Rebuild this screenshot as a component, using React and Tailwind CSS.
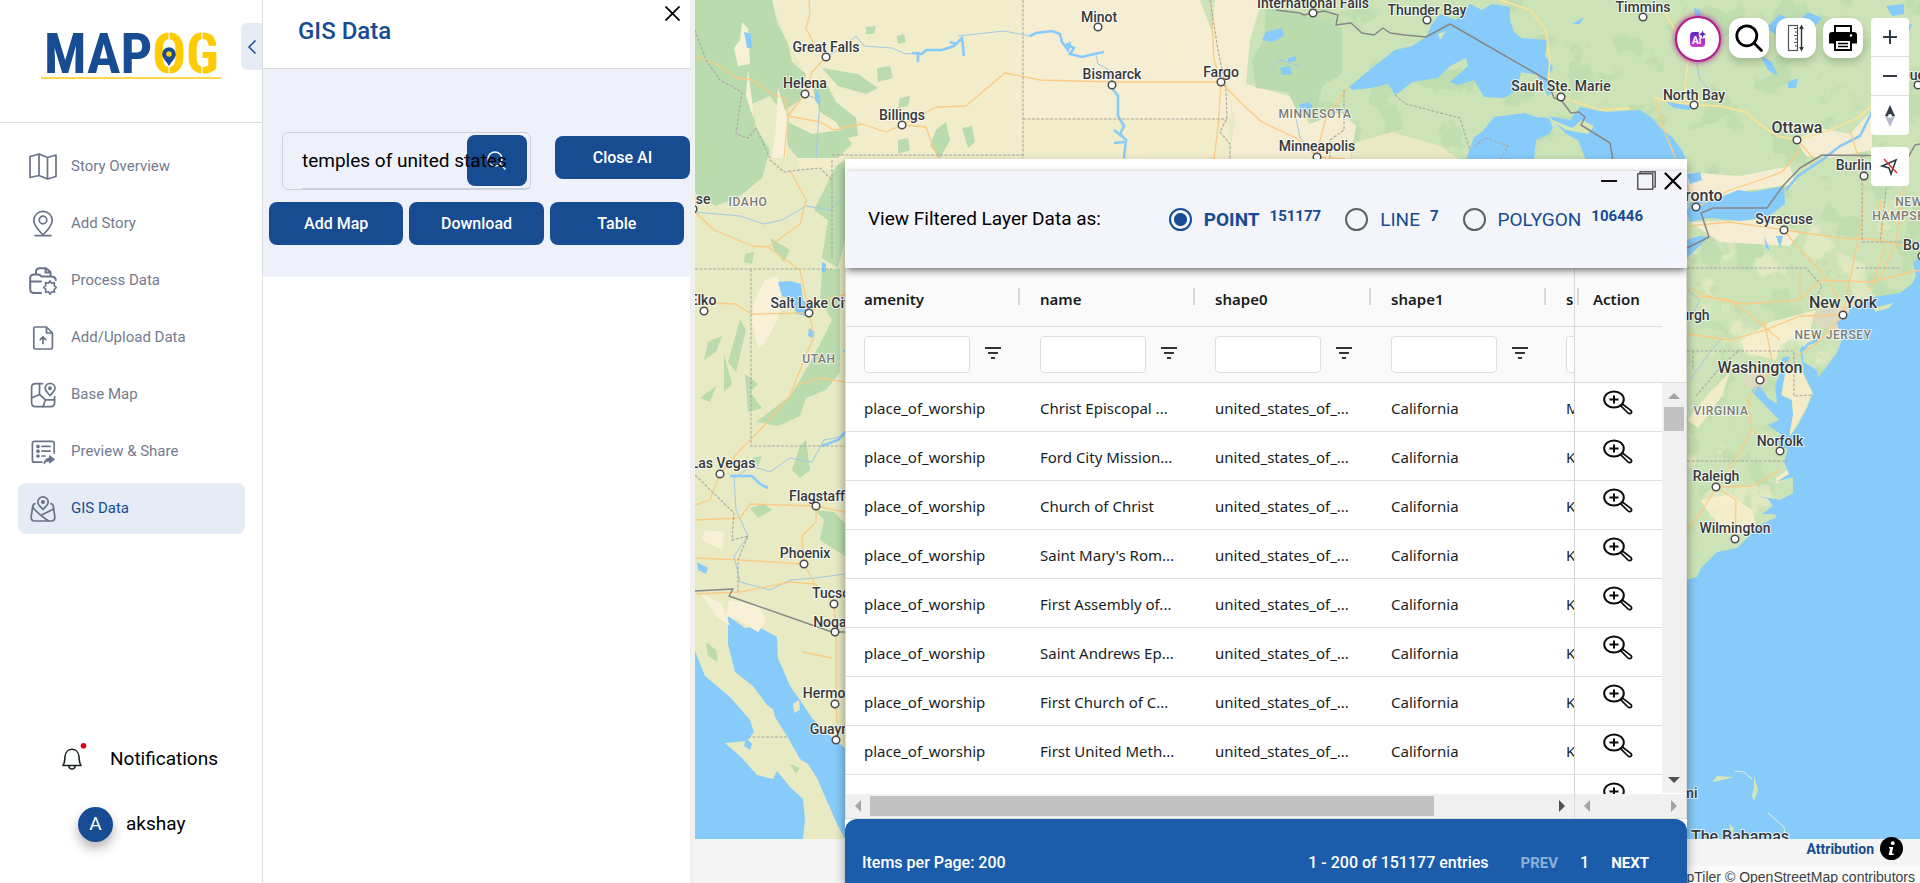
import React from 'react';

const ROBOTO = "font-['Roboto','Liberation_Sans',sans-serif]";
const GRIDFONT = "font-['Noto_Sans','Open_Sans',sans-serif]";

/* ---------- sidebar icons ---------- */
const ico = {
  width: 28,
  height: 28,
  viewBox: '0 0 28 28',
  fill: 'none',
  stroke: '#6b7389',
  strokeWidth: 1.7,
  strokeLinecap: 'round',
  strokeLinejoin: 'round',
  'aria-hidden': true,
};

const OverviewIcon = () => (
  <svg {...ico}>
    <path d="M1 3.5 L10 1 L18.5 4.5 L27 2 V23.5 L18.5 26 L10 22.5 L1 24.5 Z M10 1 V22.5 M18.5 4.5 V26" />
  </svg>
);
const PinIcon = () => (
  <svg {...ico}>
    <path d="M14 25 C10 20.5 4.8 16 4.8 10.5 A9.2 9.2 0 0 1 23.2 10.5 C23.2 16 18 20.5 14 25 Z" />
    <circle cx="14" cy="10" r="3.8" />
    <path d="M6 25.6 H22" />
  </svg>
);
const ProcessIcon = () => (
  <svg {...ico} strokeWidth="2">
    <path d="M12 26 H5 Q1.2 26 1.2 22 V11 Q1.2 7.500 5 7.500 H9 Q11 7.500 12.500 9.500 H22 Q26.500 9.500 26.800 13" />
    <path d="M7 7 V5 Q7 1.200 10.500 1.200 H17 L21.500 5 V9 M16.500 1.500 V5.500 H21" />
    <path d="M1.500 14.500 H12" />
    <path d="M21 13.800 L22.600 16.300 L25.500 15.600 L25.200 18.600 L27.400 20.500 L25.200 22.300 L25.500 25.300 L22.600 24.700 L21 27.300 L19.400 24.700 L16.500 25.300 L16.800 22.300 L14.600 20.500 L16.800 18.600 L16.500 15.600 L19.400 16.300 Z" strokeWidth="1.600" />
  </svg>
);
const UploadIcon = () => (
  <svg {...ico}>
    <path d="M6.5 3 H17.5 L23.4 9 V23.4 Q23.4 25 21.8 25 H6.2 Q4.8 25 4.8 23.4 V4.6 Q4.8 3 6.5 3 Z M17.5 3 V9 H23.4" />
    <path d="M14 19.5 V13 M11.2 15.6 L14 12.8 L16.8 15.6" />
  </svg>
);
const BaseMapIcon = () => (
  <svg {...ico}>
    <path d="M13.5 2.6 H6.5 Q2.6 2.6 2.6 6.5 V21.5 Q2.6 25.6 6.5 25.6 H21.5 Q25.6 25.6 25.6 21.5 V15.5" />
    <path d="M10.5 2.6 V13.5 L2.6 17 M10.5 13.5 L16.5 18.8 L14 25.6 M16.5 18.8 H25.4" />
    <path d="M21 14.5 C18.5 11.5 16.2 9.8 16.2 7.2 A4.9 4.9 0 0 1 26 7.2 C26 9.8 23.5 11.5 21 14.5 Z" />
    <circle cx="21" cy="7.2" r="1.1" fill="#6b7389" />
  </svg>
);
const ShareIcon = () => (
  <svg {...ico}>
    <path d="M13 24.2 H5.4 Q3.4 24.2 3.4 22.2 V5.4 Q3.4 3.4 5.4 3.4 H23.2 Q25.2 3.4 25.2 5.4 V15" />
    <path d="M13 8.4 H21 M13 13.2 H21 M13 18 H16" />
    <g fill="#6b7389">
      <circle cx="9" cy="8.4" r="1" />
      <circle cx="9" cy="13.2" r="1" />
      <circle cx="9" cy="18" r="1" />
      <path d="M15 25.5 Q15.5 20.5 20.5 20 V17.6 L25.5 21.4 L20.5 25 V22.8 Q17 22.8 15 25.5 Z" strokeWidth="1" />
    </g>
  </svg>
);
const GisIcon = () => (
  <svg {...ico}>
    <path d="M14 14.5 C11.3 11.5 8.8 9.8 8.8 7 A5.2 5.2 0 0 1 19.2 7 C19.2 9.8 16.7 11.5 14 14.5 Z" />
    <circle cx="14" cy="7" r="1.2" fill="#6b7389" />
    <path d="M6 8.6 Q4 9 3.8 11 L2.2 21.5 Q1.8 26 5.5 26 H22.5 Q26.2 26 25.8 21.5 L24.2 11 Q24 9 22 8.6" />
    <path d="M3.6 12 Q8 18 19.5 26 M24.6 14 Q20 16.5 13.5 19.5" />
  </svg>
);

const NAV = [
  ['Story Overview', OverviewIcon],
  ['Add Story', PinIcon],
  ['Process Data', ProcessIcon],
  ['Add/Upload Data', UploadIcon],
  ['Base Map', BaseMapIcon],
  ['Preview & Share', ShareIcon],
  ['GIS Data', GisIcon],
];

function Logo() {
  return (
    <svg width="182" height="60" viewBox="0 0 182 60" role="img" aria-label="MAPOG" className="overflow-visible">
      <text x="3" y="50" fontSize="56" fontWeight="700" className="font-['Roboto_Condensed','Liberation_Sans_Narrow','Roboto',sans-serif]">
        <tspan fill="#174c92">MAP</tspan>
        <tspan fill="#ffcb05">OG</tspan>
      </text>
      <path d="M128 8 V20 M128 42 V52 M161 8 V20 M161 42 V52" stroke="#fff" strokeWidth="1.200" />
      <path d="M0 54 H181 L179 56 H0 Z" fill="#ffd84a" />
      <path d="M128 43 C125 38 121.200 35 121.200 31 A6.800 6.800 0 0 1 134.800 31 C134.800 35 131 38 128 43 Z" fill="#174c92" />
      <circle cx="128" cy="31" r="2.800" fill="#ffcb05" />
    </svg>
  );
}

function Sidebar() {
  return (
    <aside className="relative flex w-[263px] shrink-0 flex-col border-r border-[#dcdcdc] bg-white">
      <div className="flex h-[123px] shrink-0 items-start justify-start border-b border-[#dcdcdc] pl-[41px] pt-[23px]">
        <Logo />
      </div>
      <button aria-label="Collapse sidebar" className="absolute right-0 top-[23px] flex h-[47px] w-[21px] items-center justify-center rounded-l-md bg-[#e6ecf5]">
        <svg width="10" height="16" viewBox="0 0 10 16" fill="none" stroke="#174c92" strokeWidth="1.5"><path d="M8.500 1.500 L2 8 L8.500 14.500" /></svg>
      </button>
      <nav className="mt-[18px] flex flex-col gap-1.5 pl-[18px] pr-[17px]">
        {NAV.map(([label, Icon]) => {
          const active = label === 'GIS Data';
          return (
            <a key={label} href="#" className={'flex h-[51px] items-center gap-3.5 rounded-lg pl-[11px] text-[15px] ' + (active ? 'bg-[#e5ecf5] text-[#174c92]' : 'text-[#747b8e]')}>
              <Icon />
              <span>{label}</span>
            </a>
          );
        })}
      </nav>
      <div className="mb-[41px] mt-auto flex flex-col gap-[30px]">
        <button className="flex h-[36px] items-center pl-[60px] text-left text-[19px] text-black">
          <svg width="30" height="32" viewBox="0 0 30 32" fill="none" stroke="#1c2526" strokeWidth="1.600" strokeLinejoin="round" aria-hidden="true">
            <path d="M3 22.500 C5 19.500 4.600 17 5 13.500 C5.400 9 8.500 6.300 12 6.300 C15.500 6.300 18.600 9 19 13.500 C19.400 17 19 19.500 21 22.500 Z M8.800 23 Q9.200 26 12 26 Q14.800 26 15.200 23" />
            <circle cx="23.500" cy="2.800" r="2.800" fill="#d90012" stroke="none" />
          </svg>
          <span className="ml-5">Notifications</span>
        </button>
        <button className="flex h-[35px] items-center gap-[13px] pl-[78px] text-[19px] text-black">
          <span className="flex size-[35px] items-center justify-center rounded-full bg-[#174c92] text-white shadow-[0_6px_12px_rgba(0,0,0,0.3)]">A</span>
          <span>akshay</span>
        </button>
      </div>
    </aside>
  );
}

const btn = 'flex h-[43px] items-center justify-center rounded-lg bg-[#174c92] text-base font-medium text-white';

function Panel() {
  return (
    <section className="relative flex w-[427px] shrink-0 flex-col bg-white">
      <div className="h-[69px] border-b border-[#dcdcdc] pl-[35px] pt-[15px]">
        <h1 className="text-2xl font-medium leading-8 text-[#174c92]">GIS Data</h1>
        <button aria-label="Close panel" className="absolute right-2 top-1 p-0.5">
          <svg width="15" height="15" viewBox="0 0 15 15" stroke="#000" strokeWidth="1.800"><path d="M0.500 0.500 L14.500 14.500 M14.500 0.500 L0.500 14.500" /></svg>
        </button>
      </div>
      <div className="bg-[#eef1fa] pb-8 pt-[63px]">
        <div className="flex items-start gap-6 pl-[19px]">
          <div className="relative h-[58px] w-[249px] rounded-md border border-[#cdd1da] pl-[19px]">
            <button aria-label="Search" className="absolute right-[3px] top-0.5 flex h-[51px] w-[60px] items-center justify-center rounded-lg bg-[#174c92]">
              <svg width="20" height="20" viewBox="0 0 20 20" fill="none" stroke="#fff" strokeWidth="1.400"><circle cx="8" cy="8" r="7" /><path d="M13 13 L18.500 18.500" /></svg>
            </button>
            <div className="relative h-[56px] border-b border-[#c9cdd6]">
              <input aria-label="Search GIS data" defaultValue="temples of united states of america" className="h-full w-[209px] bg-transparent text-[19px] text-black outline-none" />
            </div>
          </div>
          <button className={btn + ' mt-1 flex-1'}>Close AI</button>
        </div>
        <div className="mt-3 grid grid-cols-3 gap-1.5 px-1.5">
          <button className={btn}>Add Map</button>
          <button className={btn}>Download</button>
          <button className={btn}>Table</button>
        </div>
      </div>
    </section>
  );
}

/* ---------- map ---------- */
const CITIES = [
  ['Great Falls', 826, 47, 826, 57],
  ['Helena', 805, 83, 805, 94],
  ['Billings', 902, 115, 902, 125],
  ['Minot', 1099, 17, 1098, 27],
  ['Bismarck', 1112, 74, 1112, 85],
  ['Fargo', 1221, 72, 1221, 82],
  ['International Falls', 1313, 3, 1313, 13],
  ['Minneapolis', 1317, 146, 1317, 157],
  ['Thunder Bay', 1427, 10, 1427, 20],
  ['Timmins', 1643, 7, 1643, 17],
  ['Sault Ste. Marie', 1561, 86, 1561, 97],
  ['North Bay', 1694, 95, 1694, 105],
  ['Ottawa', 1797, 128, 1797, 140],
  ['Québec', 1924, 75, 1918, 85],
  ['Burlington', 1868, 165, 1864, 176],
  ['Toronto', 1695, 196, 1696, 207],
  ['Syracuse', 1784, 219, 1784, 230],
  ['Boston', 1925, 245, 1922, 256],
  ['Pittsburgh', 1677, 315, 1660, 325],
  ['New York', 1843, 303, 1843, 315],
  ['Washington', 1760, 368, 1760, 380],
  ['Norfolk', 1780, 441, 1780, 451],
  ['Raleigh', 1716, 476, 1716, 487],
  ['Wilmington', 1735, 528, 1735, 539],
  ['Boise', 693, 199, 693, 209],
  ['Elko', 703, 300, 704, 311],
  ['Salt Lake City', 813, 303, 809, 313],
  ['Las Vegas', 723, 463, 720, 474],
  ['Flagstaff', 817, 496, 816, 506],
  ['Phoenix', 805, 553, 804, 564],
  ['Tucson', 835, 593, 834, 604],
  ['Nogales', 839, 622, 835, 632],
  ['Hermosillo', 837, 693, 835, 704],
  ['Guaymas', 839, 729, 836, 740],
  ['Miami', 1678, 793, 1660, 803],
  ['The Bahamas', 1740, 837, 0, 0],
];
const BIG = ['Ottawa', 'Toronto', 'New York', 'Washington', 'The Bahamas'];

const STATES = [
  ['MINNESOTA', 1315, 114],
  ['IDAHO', 748, 202],
  ['UTAH', 819, 359],
  ['NEW', 1909, 202],
  ['HAMPSHIRE', 1909, 216],
  ['NEW JERSEY', 1833, 335],
  ['VIRGINIA', 1721, 411],
];

const EAST_COAST =
  'M1680 0 H1200 L1215 40 L1235 120 L1222 200 V839 H1680 V582 L1697 577 L1701 568 L1717 552 L1737 548 L1750 535 L1762 524 L1777 517 L1774 514 L1762 514 L1773 506 L1768 499 L1758 496 L1780 500 L1793 493 L1793 477 L1776 482 L1789 474 L1784 462 L1788 449 L1780 447 L1776 437 L1783 436 L1768 425 L1779 420 L1760 400 L1752 392 L1760 386 L1768 398 L1777 404 L1775 384 L1782 370 L1782 358 L1790 356 L1786 370 L1781 395 L1792 400 L1793 415 L1789 437 L1797 427 L1807 408 L1813 393 L1804 374 L1800 350 L1803 344 L1803 362 L1817 370 L1818 378 L1837 353 L1843 337 L1836 322 L1847 317 L1850 309 L1873 297 L1900 293 L1912 284 L1916 276 L1913 262 L1920 258 V0 Z';

const FOREST = [
  'M695 0 H772 L777 22 L788 44 L792 62 L806 74 L800 100 L782 112 L770 96 L752 104 L756 128 L770 150 L762 178 L740 196 L716 206 L695 194 Z',
  'M811 84 L828 86 L836 102 L856 118 L858 136 L846 138 L836 122 L820 112 Z',
  'M822 68 L858 74 L878 88 L866 94 L838 86 Z',
  'M877 68 L890 66 L893 78 L878 82 Z',
  'M784 120 L800 128 L812 134 L842 130 L852 144 L838 158 L798 158 L788 146 Z',
  'M898 140 L908 138 L910 150 L898 154 Z M936 130 L946 122 L950 140 L940 158 L930 146 Z M962 128 L972 126 L975 142 L968 148 Z',
  'M897 36 L904 34 L906 42 L898 44 Z M866 27 L876 26 L874 34 L866 34 Z M900 98 L910 96 L908 106 L898 108 Z',
  'M836 166 L845 160 V240 L838 268 L822 258 L828 220 L814 210 L824 190 Z',
  'M822 270 L840 268 V372 L826 390 L806 398 L800 416 L778 426 L756 422 L790 396 L806 370 L820 344 L832 320 L820 300 Z',
  'M740 320 L746 330 L736 372 L728 362 Z M708 342 L722 336 L716 352 L704 360 Z M745 374 L758 384 L750 392 L762 408 L748 412 Z M700 398 L716 386 L710 402 Z M724 354 L732 384 L724 392 Z',
  'M800 446 L806 440 L810 470 L800 478 L792 470 Z M815 510 L834 512 L845 524 V556 L832 548 L820 540 L824 520 Z',
  'M750 508 L764 504 L772 510 L758 518 Z M752 458 L762 456 L758 466 Z M706 642 L716 650 L718 662 L708 656 Z M790 764 L800 768 L796 774 Z M770 238 L790 250 L784 262 L774 250 Z M745 254 L754 252 L752 264 L744 262 Z',
  'M1266 8 L1300 14 L1342 28 L1342 74 L1322 86 L1316 112 L1300 118 L1288 92 L1256 88 L1252 60 L1264 40 Z',
];

const BARE = [
  'M742 22 L748 28 L750 64 L738 66 L734 48 L740 40 Z',
  'M748 70 L752 100 L754 120 L746 96 Z',
  'M778 88 L788 120 L786 158 L772 158 L776 128 Z',
  'M765 280 L778 276 L782 300 L778 318 L766 342 L758 348 L752 322 L754 302 Z',
  'M729 600 L760 606 L766 622 L758 632 L738 620 L726 616 Z',
  'M700 592 L722 604 L730 626 L716 616 Z M705 530 L724 532 L722 550 L702 540 Z',
];

const ROADS = [
  'M809 0 L810 14 L806 28 L814 44 L826 57 L812 72 L805 94 L788 116 L784 158',
  'M695 56 L720 66 L736 78 L752 80 L772 94 L786 98 L788 116 L820 122 L834 130 L862 124 L886 132 L902 125 L926 127 L932 144 L938 158',
  'M902 125 L936 107 L966 106 L980 94 L1005 73 L1040 80 L1112 82 L1221 82 L1240 102 L1262 122 L1296 138 L1317 157',
  'M1211 0 L1214 60 L1221 82 L1218 128 L1214 159',
  'M695 212 L714 230 L752 246 L768 247 L800 224 L806 200 L790 170 M768 247 L800 270 L809 313 L814 336 L796 380 L790 396 L760 430 L740 450 L720 474 L710 500 L695 505',
  'M695 302 L735 304 L752 314 L809 313 L830 298 L845 295 M796 385 L820 378 L845 382',
  'M695 520 L740 518 L750 504 L816 506 L845 512 M816 506 L816 522 L802 536 L804 564 L815 584 L834 604 L836 632 L836 704 L838 740',
  'M695 558 L740 560 L804 564 M695 594 L740 592 L790 582 L815 584 M803 652 L832 658',
  'M1349 87 L1340 98 L1326 118 L1320 140 L1317 157 L1345 159',
  'M1656 100 L1664 130 L1676 160 L1696 207 L1730 190 L1760 180 L1782 172 L1800 150',
  'M1689 226 L1730 222 L1784 230 L1840 238 L1880 240 L1920 250 M1784 230 L1800 250 L1820 270 L1840 300',
  'M1797 140 L1815 160 L1800 168 M1850 130 L1864 176 L1862 220 L1852 270 L1843 315',
  'M1687 288 L1720 300 L1745 304 L1800 300 L1820 280 L1870 282 L1920 270 M1687 334 L1730 340 L1765 330 L1800 316 L1843 315',
  'M1843 315 L1815 345 L1790 360 L1760 380 L1748 402 L1752 430 L1735 460 L1716 487 L1704 508 L1687 530',
  'M1697 296 L1730 300 L1756 320 L1780 340 M1764 320 L1772 360 M1716 487 L1736 500 L1735 539 M1716 487 L1752 486 L1780 470 M1752 430 L1780 451',
  'M1800 300 L1800 270 M1880 200 L1884 250 L1870 290 M1905 180 L1896 240 L1880 280',
];
const MINOR_ROADS = [
  'M1500 0 L1530 10 L1546 30 L1550 60 L1548 82 L1561 97 L1600 110 L1630 108',
  'M1664 10 L1676 32 L1688 60 L1684 98 L1694 105',
  'M1654 98 L1694 105 L1720 106 L1746 112 L1762 126 L1778 136 L1797 140 L1830 130 L1858 118 L1880 98',
];

const STATE_LINES = [
  'M1023 0 V158', 'M832 155 H1023', 'M1023 119 H1227', 'M1210 0 L1218 50 L1226 90 L1227 118 L1220 132 L1230 144 V159',
  'M695 30 L706 60 L720 80 L742 92 L736 134 L748 138 L756 128 L770 158', 'M832 160 V259', 'M695 269 H832', 'M751 269 V446 H845',
  'M695 475 L734 513 L732 540 L748 536 L738 560 L738 592', 'M770 160 L784 172 L800 170 L820 168 L832 180', 'M748 737 H787',
  'M1344 90 V130 L1330 140 V159 M1395 95 L1406 104 L1460 118 L1470 150', 'M1474 146 L1486 138 L1508 146 L1500 160',
  'M1687 268 H1806 L1822 286 L1812 305', 'M1687 351 H1794 V396 L1813 395', 'M1687 461 H1788', 'M1862 242 H1920 M1856 268 H1900', 'M1696 396 L1725 362 L1740 350 M1693 351 V370',
  'M1862 156 V242 M1890 156 L1880 242',
];

const BORDERS = [
  'M1276 10 L1300 13 L1304 15 L1324 11 L1338 15 L1336 25 L1351 23 L1362 33 L1374 35 L1383 28 L1390 33 L1405 35 L1426 37 L1450 24 L1547 80 L1554 98 L1561 100 L1571 113 L1579 112 L1585 117 L1581 125 L1610 143 L1613 160',
  'M1687 248 L1709 237 L1701 213 L1713 208 L1767 208 L1782 187 L1800 168 L1822 155 L1909 156 L1915 145 L1920 144',
  'M695 591 L733 589 L729 596 L832 632 H845',
];

const LAKES = [
  'M1349 87 L1372 68 L1395 50 L1412 46 L1426 37 L1432 24 L1440 14 L1456 20 L1470 4 L1482 10 L1492 4 L1510 7 L1510 20 L1514 32 L1521 38 L1547 40 L1545 56 L1553 67 L1547 80 L1554 90 L1548 96 L1537 75 L1521 72 L1517 90 L1504 98 L1484 97 L1474 80 L1458 85 L1450 82 L1468 66 L1466 58 L1450 66 L1438 78 L1412 82 L1400 92 L1395 95 L1388 84 L1371 88 L1352 90 Z',
  'M1466 160 L1474 137 L1482 132 L1494 117 L1525 113 L1536 117 L1549 118 L1553 128 L1549 134 L1536 140 L1534 160 Z',
  'M1549 116 L1570 120 L1580 107 L1606 112 L1640 110 L1652 118 L1660 128 L1672 137 L1682 150 L1686 160 H1586 L1578 140 L1566 134 Z',
  'M1687 213 L1690 202 L1716 199 L1738 190 L1752 192 L1784 186 L1785 204 L1768 217 L1740 221 L1709 218 L1690 222 Z',
  'M1687 240 L1700 236 L1709 237 L1687 258 Z',
  'M1687 174 L1700 172 L1702 180 L1690 184 Z',
  'M1666 102 L1692 106 L1690 110 L1674 108 Z',
  'M1262 40 L1266 32 L1282 28 L1284 36 L1272 42 Z',
  'M1280 68 L1290 66 L1292 74 L1282 75 Z M1288 58 L1296 56 L1296 61 L1288 62 Z M1306 102 L1312 104 L1312 109 L1304 109 Z M1280 59 L1284 60 L1282 62 Z',
  'M744 32 L751 34 L752 48 L747 48 Z',
  'M815 88 L820 96 L820 106 L815 100 Z',
  'M778 282 L790 281 L801 284 L803 300 L812 306 L806 316 L796 314 L793 300 L782 296 Z',
  'M822 262 L826 264 L826 272 L822 272 Z M809 328 L815 332 L812 338 L808 336 Z',
  'M697 562 L708 568 L706 574 L698 570 Z',
  'M1300 104 L1310 102 L1308 112 L1300 110 Z',
  'M1886 6 L1904 4 L1904 14 L1892 16 Z M1900 26 L1912 24 L1910 30 L1900 30 Z',
  'M1766 28 L1780 14 L1790 20 L1778 36 Z M1800 20 L1808 12 L1822 18 L1812 30 L1804 26 Z M1760 55 L1772 62 L1778 76 L1768 70 Z',
  'M1694 8 L1698 36 L1704 38 L1700 10 Z M1788 82 L1798 78 L1796 88 L1788 88 Z M1572 24 L1584 17 L1580 24 Z',
  'M1776 236 L1783 236 L1780 248 Z M1764 236 L1770 250 L1766 248 Z',
];

const RIVERS = [
  'M826 57 L842 48 L856 36 L864 46 L892 48 L906 54 L920 53',
  'M958 36 L1004 31 L1030 36 M1096 54 L1098 64 L1110 70 L1112 85',
  'M805 94 L820 100 L816 158',
  'M695 212 L740 216 L764 224 L782 220 L806 206 L830 210 L845 196',
  'M845 436 L824 440 L812 462 L790 458 L770 472 L752 466 L734 478 L736 510 L748 536 L734 556 L740 582 L770 590 L790 580 L815 578 L845 574',
  'M1317 157 L1300 138 L1296 118 L1312 98 M1300 66 L1280 60 L1270 70',
  'M1696 60 L1700 80 L1712 92 L1722 108', 'M1687 290 L1700 300 L1690 320 M1690 380 L1710 352 L1722 338',
];
const STRONG_RIVERS = [
  'M912 53 L922 54 L926 50 L942 50 L954 46 L962 38 L964 56 M918 52 L918 62 M956 44 L950 42',
  'M1030 36 L1036 33 L1044 32 L1052 31 L1060 34 L1062 42 L1068 50 L1070 42 M1066 44 L1074 48 L1070 54 L1082 57 L1094 54 L1104 52',
  'M1112 88 L1118 96 L1118 116 L1124 126 L1120 134 L1126 140 L1124 158 M1114 130 L1124 138 M1114 143 L1124 142',
  'M845 350 V352 M730 476 L752 476 L760 484 L768 488 M822 446 L838 440 L845 432',
  'M1786 190 L1798 176 L1822 160 L1840 146 L1860 136 L1872 112 L1888 104',
  'M1866 180 L1862 160 L1858 170', 'M1803 350 L1808 344 L1818 340 M1752 392 L1758 386',
];

function MapCanvas() {
  return (
    <svg className="block h-full w-full" viewBox="695 0 1225 839" preserveAspectRatio="xMinYMin slice" role="img" aria-label="Map of the United States">
      <defs>
        <filter id="forestNoise" x="0" y="0" width="100%" height="100%" colorInterpolationFilters="sRGB">
          <feTurbulence type="fractalNoise" baseFrequency="0.03" numOctaves="5" seed="11" result="n" />
          <feColorMatrix in="n" type="matrix" values="0 0 0 0 0.71  0 0 0 0 0.85  0 0 0 0 0.66  0 14 0 0 -8" />
        </filter>
        <filter id="fieldNoise" x="0" y="0" width="100%" height="100%" colorInterpolationFilters="sRGB">
          <feTurbulence type="fractalNoise" baseFrequency="0.025" numOctaves="5" seed="4" result="n" />
          <feColorMatrix in="n" type="matrix" values="0 0 0 0 0.97  0 0 0 0 0.94  0 0 0 0 0.81  12 0 0 0 -7.1" />
        </filter>
        <clipPath id="eastClip"><path d={EAST_COAST} /></clipPath>
      </defs>

      <rect x="695" y="0" width="1225" height="839" fill="#86cbfa" />
      <path d="M695 0 H1300 V839 H845 V748 L830 736 L812 718 L800 700 L790 686 L778 658 L777 637 L757 626 L745 628 L728 616 V644 L735 672 L753 686 L770 709 L787 736 L800 759 L808 764 L817 778 L827 801 L837 824 L845 839 H803 L805 819 L803 799 L790 787 L777 771 L773 779 L757 775 L743 759 L725 743 L747 741 L754 732 L750 720 L730 697 L705 676 L695 651 Z" fill="#e7eac3" />
      <path d="M772 0 H1240 L1225 60 L1232 170 H800 L790 120 L806 74 L786 40 Z" fill="#f1ecc9" />
      <path d="M1023 0 H1240 L1225 60 L1232 118 H1023 Z" fill="#f6eed2" />
      <path d={EAST_COAST} fill="#cbe3b6" />
      <g clipPath="url(#eastClip)">
        <rect x="1300" y="0" width="620" height="600" filter="url(#forestNoise)" opacity="0.5" />
        <path d="M1215 0 H1262 L1250 40 L1246 84 L1290 96 L1310 124 L1340 112 L1356 126 L1350 160 H1200 Z" fill="#f5edd1" />
        <path d="M1356 142 L1392 132 L1440 146 L1460 160 H1350 Z M1592 130 L1610 122 L1640 134 L1630 146 Z" fill="#ebe9c4" />
        <path d="M1687 172 L1740 176 L1790 166 L1796 184 L1752 190 L1690 204 Z M1690 222 L1760 220 L1800 232 L1790 246 L1720 242 Z M1796 140 L1820 128 L1850 134 L1872 110 V150 L1830 158 L1806 156 Z" fill="#f5edd1" />
        <path d="M1742 340 L1770 322 L1816 310 L1810 330 L1780 345 L1776 360 L1744 352 Z M1784 366 L1802 372 L1812 392 L1806 408 L1790 436 L1792 400 L1782 396 Z M1687 420 L1710 392 L1730 372 L1722 396 L1698 428 Z" fill="#f3ecc8" />
        <path d="M1700 500 L1730 494 L1752 510 L1756 524 L1736 536 L1718 524 Z M1776 478 L1790 468 L1792 476 L1776 484 Z" fill="#f3ecc8" />
        <rect x="1687" y="200" width="233" height="380" filter="url(#fieldNoise)" opacity="0.5" />
        <ellipse cx="1838" cy="318" rx="26" ry="12" fill="#e3d6c4" opacity="0.7" />
        <ellipse cx="1756" cy="380" rx="12" ry="9" fill="#e3d6c4" opacity="0.7" />
      </g>
      <rect x="800" y="0" width="420" height="160" filter="url(#fieldNoise)" opacity="0.35" />
      <g fill="#b9dbad">
        {FOREST.map((d) => <path key={d} d={d} />)}
      </g>
      <g fill="#f8f1d8">
        {BARE.map((d) => <path key={d} d={d} />)}
      </g>
      <g fill="#86cbfa">
        {LAKES.map((d) => <path key={d} d={d} />)}
      </g>
      <path d="M1874 308 L1893 303 L1889 308 L1875 312 Z M1712 782 L1717 776 L1734 777 L1718 781 Z M1754 776 L1758 790 L1754 801 L1752 796 L1754 788 Z M1729 824 L1734 828 L1732 836 Z M1438 34 L1446 31 L1440 40 Z M1548 118 L1572 128 L1582 120 L1594 126 L1588 134 L1566 130 Z" fill="#d6e6b4" />
      <path d="M763 703 L773 709 L775 716 L767 711 Z M793 704 L799 700 L800 710 L794 713 Z" fill="#e7eac3" />
      <path d="M746 738 L752 744 L750 750 L744 746 Z" fill="#86cbfa" />
      <path d="M1735 771 L1744 772 L1752 779 M1768 813 L1784 827 L1785 834" fill="none" stroke="#e6efd0" strokeWidth="1" />
      <g fill="none" stroke="#a3c8e4" strokeWidth="1">
        {RIVERS.map((d) => <path key={d} d={d} />)}
      </g>
      <g fill="none" stroke="#86cbfa" strokeWidth="2.6">
        {STRONG_RIVERS.map((d) => <path key={d} d={d} />)}
      </g>
      <g fill="none" stroke="#fbcb86" strokeWidth="1.3" strokeLinejoin="round">
        {ROADS.map((d) => <path key={d} d={d} />)}
      </g>
      <g fill="none" stroke="#f8e39a" strokeWidth="1.800" strokeLinejoin="round">
        {MINOR_ROADS.map((d) => <path key={d} d={d} />)}
      </g>
      <g fill="none" stroke="#aaa9a2" strokeWidth="1.100" strokeDasharray="3 1.500">
        {STATE_LINES.map((d) => <path key={d} d={d} />)}
      </g>
      <g fill="none" stroke="#878787" strokeWidth="1.500" strokeLinejoin="round">
        {BORDERS.map((d) => <path key={d} d={d} />)}
      </g>

      <g className={ROBOTO} textAnchor="middle" stroke="#ffffff" strokeOpacity="0.75" strokeWidth="2" paintOrder="stroke" strokeLinejoin="round">
        <g fill="#7c7a78" fontSize="12" fontWeight="500" className="tracking-wider">
          {STATES.map(([t, x, y]) => <text key={t} x={x} y={y + 4}>{t}</text>)}
        </g>
        <g fill="#37393d" fontWeight="500">
          {CITIES.map(([t, x, y]) => <text key={t} x={x} y={y + 5} fontSize={BIG.includes(t) ? 16 : 14}>{t}</text>)}
        </g>
      </g>
      <g fill="#ffffff" stroke="#4c4c50" strokeWidth="1.500">
        {CITIES.filter((c) => c[3] > 0).map(([t, , , x, y]) => <circle key={t} cx={x} cy={y} r="3.800" />)}
      </g>
    </svg>
  );
}

const tile = 'flex size-10 items-center justify-center rounded-xl bg-white shadow-[0_4px_8px_rgba(0,0,0,0.2)]';
const ctl = 'flex h-[39px] w-[38px] items-center justify-center';

function MapTools() {
  return (
    <div className="absolute right-[11px] top-4 flex items-start gap-2">
      <button aria-label="AI assistant" className="flex size-[46px] items-center justify-center rounded-full border-2 border-[#b01d8c] bg-white shadow-[0_0_6px_#b01d8c]">
        <svg width="18" height="18" viewBox="0 0 18 18">
          <defs><linearGradient id="ai" x1="0" y1="0" x2="0" y2="1"><stop offset="0" stopColor="#5a28b8" /><stop offset="1" stopColor="#cf3fd0" /></linearGradient></defs>
          <rect x="1" y="2" width="15" height="15" rx="3.500" fill="url(#ai)" />
          <circle cx="14" cy="4" r="4.500" fill="#fff" />
          <path d="M13.500 0.500 L14.600 3.100 L17.200 4.200 L14.600 5.300 L13.500 7.900 L12.400 5.300 L9.800 4.200 L12.400 3.100 Z" fill="#5a28b8" />
          <text x="3" y="14" fontSize="10" fontWeight="700" fill="#fff" className={ROBOTO}>Ai</text>
        </svg>
      </button>
      <div className="mt-0.5 flex gap-[7px]">
        <button aria-label="Search map" className={tile}>
          <svg width="28" height="28" viewBox="0 0 28 28" fill="none" stroke="#000" strokeWidth="2.800" strokeLinecap="round"><circle cx="11.800" cy="11.800" r="10" /><path d="M19 19 L26.500 26.500" /></svg>
        </button>
        <button aria-label="Measure" className={tile}>
          <svg width="18" height="28" viewBox="0 0 18 28" fill="none" stroke="#555" strokeWidth="1.200"><rect x="1.500" y="1.500" width="9" height="25" /><path d="M10.500 4.500 H7 M10.500 8 H8 M10.500 11.500 H7 M10.500 15 H8 M10.500 18.500 H7 M10.500 22 H8" /><path d="M14.500 3 V25 M12.800 5 L14.500 2 L16.200 5 M12.800 23 L14.500 26 L16.200 23" stroke="#333" strokeWidth="1.400" /></svg>
        </button>
        <button aria-label="Print" className={tile}>
          <svg width="28" height="26" viewBox="0 0 28 26">
            <path d="M6 8 V1 H22 V8" fill="#fff" stroke="#000" strokeWidth="2" />
            <path d="M3 7 H25 Q28 7 28 10 V18.500 H23 V14 H5 V18.500 H0 V10 Q0 7 3 7 Z" />
            <rect x="6" y="15" width="16" height="10" fill="#fff" stroke="#000" strokeWidth="2" />
            <path d="M9 18.500 H19 M9 21.500 H19" stroke="#000" strokeWidth="1.500" />
            <circle cx="22" cy="10.500" r="1.200" fill="#fff" />
          </svg>
        </button>
      </div>
      <div className="mt-0.5 flex flex-col gap-3">
        <div className="flex flex-col divide-y divide-[#dddddd] rounded bg-white">
          <button aria-label="Zoom in" className={ctl}>
            <svg width="16" height="16" viewBox="0 0 16 16" stroke="#333b45" strokeWidth="2"><path d="M8 1 V15 M1 8 H15" /></svg>
          </button>
          <button aria-label="Zoom out" className={ctl}>
            <svg width="16" height="16" viewBox="0 0 16 16" stroke="#333b45" strokeWidth="2"><path d="M1 8 H15" /></svg>
          </button>
          <button aria-label="Reset bearing" className={ctl}>
            <svg width="12" height="22" viewBox="0 0 12 22"><path d="M6 0 L11 11 H1 Z" fill="#333b45" /><path d="M6 22 L11 11 H1 Z" fill="#b3b9c9" /><circle cx="6" cy="11" r="2" fill="#fff" /></svg>
          </button>
        </div>
        <button aria-label="Find my location" className={ctl + ' rounded bg-white'}>
          <svg width="20" height="20" viewBox="0 0 20 20" fill="none" strokeWidth="1.600"><path d="M2 9 L16 3 L11 17 L9 11 Z" stroke="#333b45" /><path d="M4 2 L17 16" stroke="#e02a2a" strokeWidth="1.400" /></svg>
        </button>
      </div>
    </div>
  );
}

/* ---------- data window ---------- */
const ROWS = [
  ['Christ Episcopal ...', 'Marin'],
  ['Ford City Mission...', 'Kern'],
  ['Church of Christ', 'Kern'],
  ["Saint Mary's Rom...", 'Kern'],
  ['First Assembly of...', 'Kern'],
  ['Saint Andrews Ep...', 'Kern'],
  ['First Church of C...', 'Kern'],
  ['First United Meth...', 'Kern'],
];
const COLS = ['amenity', 'name', 'shape0', 'shape1', 'shape2'];

const FilterIcon = () => (
  <svg width="18" height="14" viewBox="0 0 18 14" stroke="#303438" strokeWidth="1.800" aria-hidden="true"><path d="M1 2 H17 M4 7 H14 M7 12 H11" /></svg>
);
const ZoomToIcon = () => (
  <svg width="30" height="25" viewBox="0 0 30 25" fill="none" stroke="#0b0b0b" strokeWidth="2" aria-hidden="true">
    <ellipse cx="11" cy="9.500" rx="9.800" ry="8" />
    <path d="M11 5.500 V13.500 M6.500 9.500 H15.500" />
    <path d="M17.500 15.500 L19.500 14 L28 20.500 Q29.500 22.500 27.500 23.500 Q26 24 25 23 Z" strokeWidth="1.700" />
  </svg>
);

const th = 'relative h-[58px] border-b border-[#dcdcdc] p-0 pl-[18px] pt-1 text-left text-[15px] font-semibold text-[#181d1f]';
const td = 'h-[49px] whitespace-nowrap border-b border-[#dde0e2] p-0 pl-[18px] pt-0.5 text-[15px] text-[#181d1f]';
const sep = 'absolute top-[19px] h-[17px] w-0.5 bg-[#d8d9da]';

function MainTable() {
  return (
    <table className="w-[878px] table-fixed border-separate border-spacing-0">
      <colgroup>
        <col className="w-[176px]" /><col className="w-[175px]" /><col className="w-[176px]" /><col className="w-[175px]" /><col className="w-[176px]" />
      </colgroup>
      <thead className="bg-[#fafafa]">
        <tr>
          {COLS.map((c) => (
            <th key={c} scope="col" className={th}>{c}<span className={sep + ' right-0.5'} /></th>
          ))}
        </tr>
        <tr>
          {COLS.map((c) => (
            <th key={c} className="h-[56px] border-b border-[#dcdcdc] p-0 pl-[18px]">
              <div className="flex items-center gap-3.5">
                <input aria-label={'Filter ' + c} className="h-[37px] w-[106px] rounded border border-[#dcdedf] bg-white px-2 text-sm font-normal" />
                <button aria-label={'Open filter for ' + c} className="pb-1"><FilterIcon /></button>
              </div>
            </th>
          ))}
        </tr>
      </thead>
      <tbody className="bg-white">
        {ROWS.map(([name, county]) => (
          <tr key={name}>
            <td className={td}>place_of_worship</td>
            <td className={td}>{name}</td>
            <td className={td}>united_states_of_...</td>
            <td className={td}>California</td>
            <td className={td}>{county}</td>
          </tr>
        ))}
      </tbody>
    </table>
  );
}

function ActionTable() {
  return (
    <table className="w-full border-separate border-spacing-0">
      <thead className="bg-[#fafafa]">
        <tr><th scope="col" className={th}><span className={sep + ' left-0.5'} />Action</th></tr>
        <tr><td className="h-[56px] border-b border-[#dcdcdc]" /></tr>
      </thead>
      <tbody className="bg-white">
        {Array.from({ length: 9 }, (_, i) => (
          <tr key={i}>
            <td className="h-[49px] border-b border-[#dde0e2] p-0 pb-2.5 pl-7 align-middle">
              <button aria-label={'Zoom to row ' + (i + 1)} className="block"><ZoomToIcon /></button>
            </td>
          </tr>
        ))}
      </tbody>
    </table>
  );
}

const Arrow = ({ d, dark }) => (
  <svg width="12" height="12" viewBox="0 0 12 12" fill={dark ? '#505050' : '#a3a3a3'} aria-hidden="true"><path d={d} /></svg>
);
const LEFT = 'M9 0 V12 L3 6 Z';
const RIGHT = 'M3 0 V12 L9 6 Z';
const UP = 'M0 9 H12 L6 3 Z';
const DOWN = 'M0 3 H12 L6 9 Z';

function Choice({ label, count, checked }) {
  return (
    <label className={'flex items-center text-[19px] text-[#174c92] ' + (checked ? 'font-bold' : '')}>
      <input
        type="radio"
        name="geometry"
        defaultChecked={checked}
        className="size-[23px] appearance-none rounded-full border-2 border-[#5f6163] checked:border-[#174c92] checked:bg-[radial-gradient(circle,#174c92_0_6px,transparent_7px)]"
      />
      <span className="ml-3 mt-0.5">{label}</span>
      <span className="mb-1.5 ml-2.5 text-[15px] font-bold">{count}</span>
    </label>
  );
}

function DataWindow() {
  return (
    <section className="absolute bottom-0 left-[150px] right-[233px] top-[159px] flex flex-col bg-white shadow-[0_5px_10px_rgba(0,0,0,0.4)]">
      <header className="relative z-10 mt-3 h-[97px] shrink-0 bg-[#f3f5fa] shadow-[0_0_4px_rgba(0,0,0,0.06),0_3px_8px_-1px_rgba(0,0,0,0.6)] [clip-path:inset(-4px_0_-12px_0)]">
        <div className="absolute right-[5px] top-0 flex items-center gap-2">
          <button aria-label="Minimize" className="mr-3"><svg width="16" height="18" viewBox="0 0 16 18" stroke="#111" strokeWidth="2"><path d="M0 9 H16" /></svg></button>
          <button aria-label="Restore"><svg width="19" height="19" viewBox="0 0 19 19" fill="none" stroke="#333" strokeWidth="1.200"><path d="M3 2.500 V0.800 H18.200 V16 H16.500" /><rect x="0.800" y="2.800" width="15" height="15.400" /></svg></button>
          <button aria-label="Close table"><svg width="18" height="18" viewBox="0 0 18 18" stroke="#000" strokeWidth="2.200" strokeLinecap="round"><path d="M1.500 1.500 L16.500 16.500 M16.500 1.500 L1.500 16.500" /></svg></button>
        </div>
        <div className="flex h-full items-center justify-between pl-[23px] pr-[44px]">
          <span className="text-[19px] text-black">View Filtered Layer Data as:</span>
          <div className="flex items-center gap-6">
            <Choice label="POINT" count="151177" checked />
            <Choice label="LINE" count="7" />
            <Choice label="POLYGON" count="106446" />
          </div>
        </div>
      </header>

      <div className={'flex min-h-0 flex-1 overflow-hidden border-x border-[#dcdcdc] ' + GRIDFONT}>
        <div className="min-w-0 flex-1 overflow-hidden pt-px"><MainTable /></div>
        <div className="w-[88px] shrink-0 overflow-hidden border-l border-[#d5d7d9] pt-px"><ActionTable /></div>
        <div className="flex w-6 shrink-0 flex-col">
          <div className="h-[115px] shrink-0 border-b border-[#dcdcdc] bg-[#fafafa]" />
          <div className="mb-px flex flex-1 flex-col items-center bg-[#f0f0f0] py-[7px]">
            <Arrow d={UP} />
            <div className="mt-[5px] h-6 w-5 bg-[#c1c1c1]" />
            <div className="mt-auto"><Arrow d={DOWN} dark /></div>
          </div>
        </div>
      </div>
      <div className="flex h-[25px] shrink-0 border border-t-0 border-[#dcdcdc] bg-[#f0f0f0]">
        <div className="flex min-w-0 flex-1 items-center px-1.5">
          <Arrow d={LEFT} />
          <div className="mx-1.5 h-5 min-w-0 flex-1"><div className="h-full w-[83%] bg-[#c1c1c1]" /></div>
          <Arrow d={RIGHT} dark />
        </div>
        <div className="flex w-[112px] items-center justify-between border-l border-[#dcdcdc] px-1.5">
          <Arrow d={LEFT} />
          <Arrow d={RIGHT} />
        </div>
      </div>
      <footer className="flex h-16 shrink-0 items-end rounded-t-xl bg-[#1b5dab] pb-2 pl-[17px] pr-[38px] text-base font-medium leading-6 text-white">
        <span>Items per Page: 200</span>
        <span className="ml-auto">1 - 200 of 151177 entries</span>
        <button disabled className="ml-8 text-[15px] font-bold text-[#8db0da]">PREV</button>
        <span className="mx-[22px]">1</span>
        <button className="text-[15px] font-bold">NEXT</button>
      </footer>
    </section>
  );
}

export default function App() {
  return (
    <div className={'flex h-screen min-h-[720px] w-full overflow-hidden bg-[#f0f0f0] ' + ROBOTO}>
      <Sidebar />
      <Panel />
      <main className="relative ml-[5px] flex min-w-0 flex-1 flex-col bg-[#f4f4f4]">
        <div className="min-h-0 flex-1 overflow-hidden"><MapCanvas /></div>
        <div className="flex h-11 shrink-0 flex-col items-end">
          <a href="#" className="-mt-0.5 flex h-[29px] items-center gap-1.5 pb-1.5 pr-[17px] text-sm font-bold text-[#174c92]">
            Attribution
            <svg width="23" height="23" viewBox="0 0 23 23" aria-hidden="true"><circle cx="11.500" cy="11.500" r="11.500" /><circle cx="12.700" cy="6.200" r="1.900" fill="#fff" /><path d="M9 10 H13.300 L11.800 16.500 H13.700 V18 H8.600 L10.200 11.600 H9 Z" fill="#fff" /></svg>
          </a>
          <div className="w-[400px] bg-[#fafafa] pr-[5px] text-right font-['Liberation_Sans',sans-serif] text-sm leading-[22px] text-[#404040]">
            <a href="#">© MapTiler</a> <a href="#">© OpenStreetMap contributors</a>
          </div>
        </div>
        <MapTools />
        <DataWindow />
      </main>
    </div>
  );
}
